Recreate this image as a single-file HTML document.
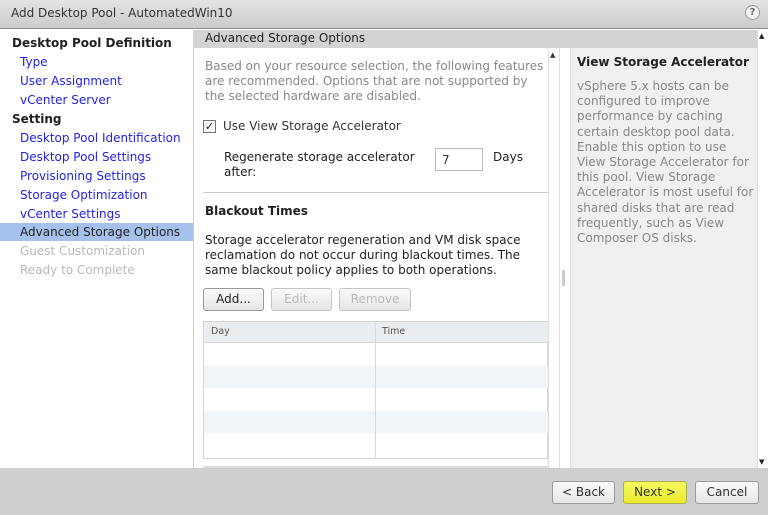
<!DOCTYPE html>
<html><head><meta charset="utf-8"><style>
*{margin:0;padding:0;box-sizing:border-box}
body{width:768px;height:515px;overflow:hidden;font-family:"DejaVu Sans",Verdana,sans-serif;font-size:12px;background:#fff;position:relative;color:#222}
.a{position:absolute;white-space:nowrap}
.nav{left:20px;color:#2323e0}
.btn{position:absolute;border:1px solid #9a9a9a;border-radius:3px;background:linear-gradient(#fafafa,#e6e6e6);text-align:center;font-size:12px;line-height:20px}
</style></head><body>
<div class="a" style="left:0;top:0;width:768px;height:29px;background:linear-gradient(#e4e4e4,#cbcbcb);border-bottom:1px solid #8e8e8e"></div>
<div class="a" style="left:11px;top:6px;font-size:12px;color:#333">Add Desktop Pool - AutomatedWin10</div>
<div class="a" style="left:745px;top:5px;width:15px;height:15px;border:1px solid #999;border-radius:50%;background:#f4f4f4;font-size:10px;font-weight:bold;color:#666;text-align:center;line-height:13px">?</div>

<div class="a" style="left:12px;top:36px;font-weight:bold;font-size:12px">Desktop Pool Definition</div>
<div class="a nav" style="top:55px">Type</div>
<div class="a nav" style="top:74px">User Assignment</div>
<div class="a nav" style="top:93px">vCenter Server</div>
<div class="a" style="left:12px;top:112px;font-weight:bold;font-size:12px">Setting</div>
<div class="a nav" style="top:131px">Desktop Pool Identification</div>
<div class="a nav" style="top:150px">Desktop Pool Settings</div>
<div class="a nav" style="top:169px">Provisioning Settings</div>
<div class="a nav" style="top:188px">Storage Optimization</div>
<div class="a nav" style="top:207px">vCenter Settings</div>
<div class="a" style="left:0;top:223px;width:193px;height:18px;background:#a6c2ec"></div>
<div class="a" style="left:20px;top:225px;color:#222">Advanced Storage Options</div>
<div class="a" style="left:20px;top:244px;color:#b8b8b8">Guest Customization</div>
<div class="a" style="left:20px;top:263px;color:#b8b8b8">Ready to Complete</div>

<div class="a" style="left:193px;top:30px;width:564px;height:18px;background:#d3d3d3"></div>
<div class="a" style="left:205px;top:31px;font-size:12px;color:#222">Advanced Storage Options</div>
<div class="a" style="left:193px;top:48px;width:564px;height:420px;background:#fff;border-left:1px solid #ccc"></div>
<div class="a" style="left:205px;top:59px;color:#888;line-height:15px">Based on your resource selection, the following features<br>are recommended. Options that are not supported by<br>the selected hardware are disabled.</div>
<div class="a" style="left:203px;top:120px;width:13px;height:13px;border:1px solid #777;background:#f4f4f4;font-size:11px;line-height:11px;text-align:center;color:#222">✓</div>
<div class="a" style="left:223px;top:119px;color:#333">Use View Storage Accelerator</div>
<div class="a" style="left:224px;top:150px;line-height:15px;color:#222">Regenerate storage accelerator<br>after:</div>
<div class="a" style="left:435px;top:148px;width:48px;height:23px;border:1px solid #bbb;padding:4px 6px;color:#333">7</div>
<div class="a" style="left:493px;top:150px">Days</div>
<div class="a" style="left:203px;top:192px;width:345px;height:1px;background:#ccc"></div>
<div class="a" style="left:205px;top:204px;font-weight:bold;font-size:12px">Blackout Times</div>
<div class="a" style="left:205px;top:233px;line-height:15px">Storage accelerator regeneration and VM disk space<br>reclamation do not occur during blackout times. The<br>same blackout policy applies to both operations.</div>
<div class="btn" style="left:203px;top:288px;width:61px;height:23px;color:#222">Add...</div>
<div class="btn" style="left:271px;top:288px;width:61px;height:23px;color:#bbb;border-color:#c4c4c4">Edit...</div>
<div class="btn" style="left:339px;top:288px;width:72px;height:23px;color:#bbb;border-color:#c4c4c4">Remove</div>
<div class="a" style="left:203px;top:321px;width:345px;height:138px;border:1px solid #d4d4d4;background:#fff"></div>
<div class="a" style="left:204px;top:322px;width:344px;height:21px;background:#eaedf0;border-bottom:1px solid #d8d8d8"></div>
<div class="a" style="left:211px;top:326px;font-size:9.5px;color:#555">Day</div>
<div class="a" style="left:382px;top:326px;font-size:9.5px;color:#555">Time</div>
<div class="a" style="left:204px;top:366px;width:344px;height:22px;background:#f1f5fa"></div>
<div class="a" style="left:204px;top:411px;width:344px;height:22px;background:#f1f5fa"></div>
<div class="a" style="left:375px;top:322px;width:1px;height:136px;background:#d8d8d8"></div>
<div class="a" style="left:203px;top:466px;width:345px;height:2px;background:#ddd"></div>
<div class="a" style="left:548px;top:48px;width:12px;height:420px;background:#fff;border-left:1px solid #ddd;border-right:1px solid #ddd"></div>
<div class="a" style="left:550px;top:51px;font-size:7px;color:#333">▲</div>
<div class="a" style="left:562px;top:270px;width:3px;height:16px;background:#ccc"></div>
<div class="a" style="left:570px;top:48px;width:187px;height:420px;background:#f0f0f0;border-left:1px solid #ddd"></div>
<div class="a" style="left:577px;top:55px;font-weight:bold;font-size:12px">View Storage Accelerator</div>
<div class="a" style="left:577px;top:79px;color:#888;line-height:15.2px">vSphere 5.x hosts can be<br>configured to improve<br>performance by caching<br>certain desktop pool data.<br>Enable this option to use<br>View Storage Accelerator for<br>this pool. View Storage<br>Accelerator is most useful for<br>shared disks that are read<br>frequently, such as View<br>Composer OS disks.</div>
<div class="a" style="left:757px;top:30px;width:11px;height:438px;background:#fff;border-left:1px solid #ddd"></div>
<div class="a" style="left:759px;top:32px;font-size:7px">▲</div>
<div class="a" style="left:759px;top:458px;font-size:7px">▼</div>

<div class="a" style="left:0;top:468px;width:768px;height:47px;background:#cfcfcf"></div>
<div class="btn" style="left:552px;top:481px;width:63px;height:23px;color:#333">&lt; Back</div>
<div class="btn" style="left:623px;top:481px;width:64px;height:23px;color:#333;background:linear-gradient(#f8f860,#eaea30);border-color:#b0b050">Next &gt;</div>
<div class="btn" style="left:695px;top:481px;width:64px;height:23px;color:#333">Cancel</div>
</body></html>
